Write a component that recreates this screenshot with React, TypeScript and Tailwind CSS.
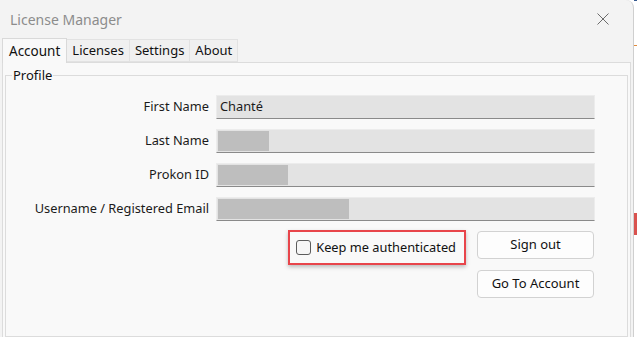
import React, { useState } from 'react';

const font = { fontFamily: '"Noto Sans", "Open Sans", sans-serif' };

const tabs = ['Account', 'Licenses', 'Settings', 'About'];

const Field: React.FC<{ label: string; value?: string; blur?: number }> = ({ label, value, blur }) => (
  <>
    <div className="flex h-[24px] items-center justify-end text-[12.8px] text-[#1b1b1b]">{label}</div>
    <div className="flex h-[24px] items-center border border-[#ececec] border-b-[#8a8a8a] bg-[#e3e3e3] px-[1px] text-[12.8px] text-[#1b1b1b]">
      {value && <span className="pl-[2px]">{value}</span>}
      {blur && <div className="h-[20px] bg-[#bebebe]" style={{ width: blur }} />}
    </div>
  </>
);

const App: React.FC = () => {
  const [keep, setKeep] = useState(false);
  const [active, setActive] = useState('Account');

  return (
    <div className="flex h-[337px] w-[637px] overflow-hidden bg-white" style={font}>
      <div className="flex h-full w-[634px] flex-col rounded-tr-[8px] border-r border-[#cfcfcf] bg-[#f3f3f3]">
        {/* Title bar */}
        <div className="flex h-[38px] items-center justify-between pl-[10px] pr-[24px]">
          <span className="text-[14px] text-[#8c8c8c]">License Manager</span>
          <svg width="12" height="12" viewBox="0 0 12 12" className="text-[#6b6b6b]">
            <path d="M0.5 0.5L11.5 11.5M11.5 0.5L0.5 11.5" stroke="currentColor" strokeWidth="1" />
          </svg>
        </div>

        {/* Tabs */}
        <div className="flex h-[24px] items-end px-[2px]">
          {tabs.map((t) =>
            t === active ? (
              <button
                key={t}
                onClick={() => setActive(t)}
                className="relative -mb-px flex h-[25px] items-center border border-b-0 border-[#d9d9d9] bg-[#f9f9f9] px-[6px] pt-[1px] text-[13.5px] text-[#111]"
              >
                {t}
              </button>
            ) : (
              <button
                key={t}
                onClick={() => setActive(t)}
                className="flex h-[23px] items-center border border-l-0 border-[#e2e2e2] bg-[#f0f0f0] px-[5px] pt-[1px] text-[13px] text-[#111]"
              >
                {t}
              </button>
            )
          )}
        </div>

        {/* Panel */}
        <div className="mx-[2px] flex flex-1 flex-col border border-b-0 border-[#dcdcdc] bg-[#f9f9f9] px-[2px]">
          <fieldset className="mt-[4px] flex-1 border border-[#dcdcdc] pl-0 pr-0">
            <legend className="ml-[6px] px-[1px] text-[13px] leading-[16px] text-[#111]">Profile</legend>
            <div className="grid grid-cols-[203px_379px] gap-x-[7px] gap-y-[10px] pt-[12px]">
              <Field label="First Name" value="Chanté" />
              <Field label="Last Name" blur={51} />
              <Field label="Prokon ID" blur={70} />
              <Field label="Username / Registered Email" blur={131} />
            </div>

            <div className="mt-[10px] flex items-start justify-end gap-[11px] pr-[33px]">
              <label className="-mt-px flex h-[35px] cursor-pointer items-center gap-[5px] border-2 border-[#e8454b] px-[6px] pr-[8px] text-[12.8px] text-[#111] shadow-[0_2px_4px_rgba(0,0,0,0.25)]">
                <input
                  type="checkbox"
                  checked={keep}
                  onChange={(e) => setKeep(e.target.checked)}
                  className="h-[15px] w-[15px] appearance-none rounded-[3px] border border-[#5c5c5c] bg-[#f6f6f6]"
                />
                Keep me authenticated
              </label>
              <div className="flex flex-col gap-[11px]">
                <button className="h-[28px] w-[117px] rounded-[4px] border border-[#d2d2d2] bg-[#fdfdfd] text-[13px] text-[#111]">
                  Sign out
                </button>
                <button className="h-[28px] w-[117px] rounded-[4px] border border-[#d2d2d2] bg-[#fdfdfd] text-[13px] text-[#111]">
                  Go To Account
                </button>
              </div>
            </div>
          </fieldset>
        </div>
      </div>
      <div className="flex flex-1 flex-col">
        <div className="h-[1px] bg-[#35598f]" />
        <div className="mt-[44px] h-[1px] bg-[#e08a3c]" />
        <div className="mt-[167px] h-[22px] bg-[#d9534f]" />
      </div>
    </div>
  );
};

export default App;
